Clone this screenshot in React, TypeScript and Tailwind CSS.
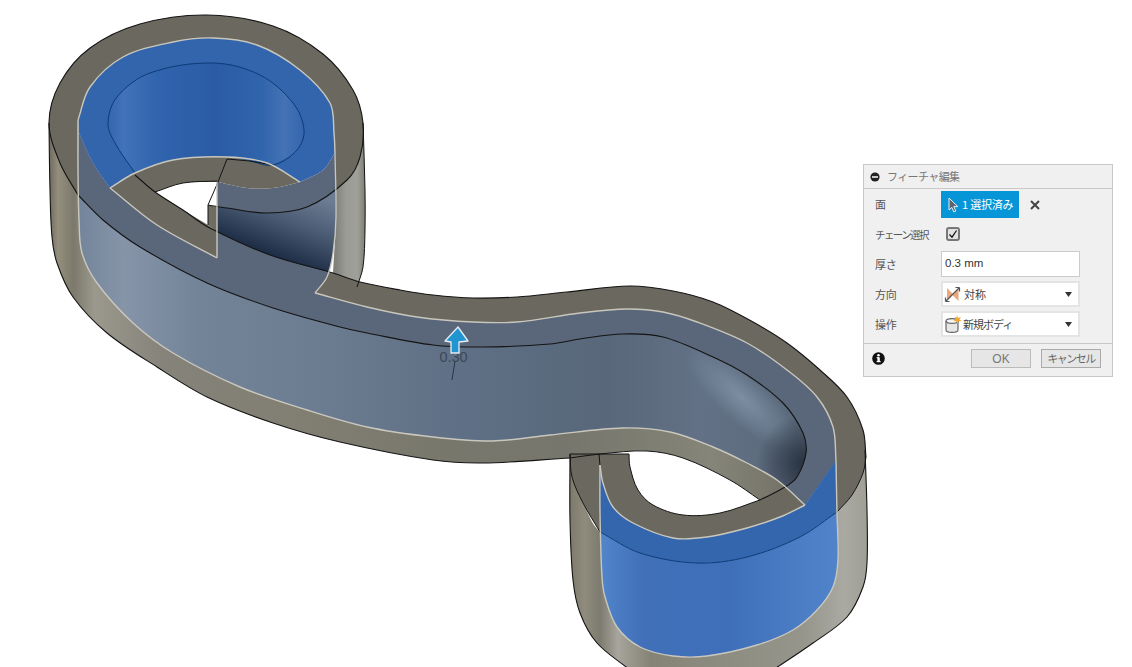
import React from "react";

type Pt = [number, number];

function seg(p: Pt[]): string {
  let d = "";
  const tan = (a: Pt, c: Pt): Pt => {
    const dx = c[0] - a[0];
    const dy = c[1] - a[1];
    const l = Math.hypot(dx, dy) || 1;
    return [dx / l, dy / l];
  };
  for (let i = 0; i < p.length - 1; i++) {
    const a = p[Math.max(0, i - 1)];
    const b = p[i];
    const c = p[i + 1];
    const e = p[Math.min(p.length - 1, i + 2)];
    const len = Math.hypot(c[0] - b[0], c[1] - b[1]) / 3;
    const t1 = tan(a, c);
    const t2 = tan(b, e);
    d += ` C${(b[0] + t1[0] * len).toFixed(1)} ${(b[1] + t1[1] * len).toFixed(1)} ${(c[0] - t2[0] * len).toFixed(1)} ${(c[1] - t2[1] * len).toFixed(1)} ${c[0]} ${c[1]}`;
  }
  return d;
}
function open(...parts: Pt[][]): string {
  let d = `M${parts[0][0][0]} ${parts[0][0][1]}`;
  parts.forEach((p, i) => {
    if (i > 0) d += ` L${p[0][0]} ${p[0][1]}`;
    d += seg(p);
  });
  return d;
}
const closed = (...parts: Pt[][]) => open(...parts) + " Z";
const rev = (p: Pt[]) => [...p].reverse();

const L1: Pt[] = [[78,120],[78,170],[79,220],[82,253],[97,283],[133,323],[173,353],[240,387],[307,410],[367,427],[433,437],[492,441],[550,435],[623,428],[670,432],[713,447],[747,463],[777,480],[805,505]];
const LT: Pt[] = [[315,293],[367,307],[417,317],[473,322],[517,322],[580,313],[627,309],[663,312],[697,322],[747,343],[787,370],[817,397],[833,427],[836,460]];
const LL: Pt[] = [[79,133],[93,163],[110,188]];
const LL2: Pt[] = [[110,188],[157,225],[217,258]];
const B1: Pt[] = [[78,195],[103,220],[140,247],[207,283],[273,308],[340,327],[367,333],[433,345],[483,347],[550,344],[580,339],[623,334],[663,337],[713,357],[747,375],[783,403],[803,433],[806,453],[797,477],[785,487],[760,500]];
const B2R: Pt[] = [[333,273],[360,282],[400,290],[433,295],[473,298],[517,297],[567,292],[630,286],[673,291],[713,302],[753,322],[787,343],[820,370],[847,397],[863,430],[866,457]];
const B2: Pt[] = [[135,175],[155,192],[183,210],[208,227],[270,255],...B2R];
const SB: Pt[] = [[49,123],[50,190],[52,237],[57,263],[73,297],[107,333],[157,367],[207,397],[273,423],[340,442],[433,460],[483,463],[570,458]];
const HU: Pt[] = [[570,458],[600,454],[647,451],[683,458],[730,480],[760,500]];
const OUTA: Pt[] = [[78,195],[60,163],[49,123],[60,83],[90,48],[140,24],[207,15],[273,26],[323,54],[353,90],[363,123],[360,157],[347,180],[335,190]];
const OUT: Pt[] = [...OUTA.slice(0, 13), [307,207],[267,213],[227,208],[208,205]];
const IN: Pt[] = [[78,120],[90,87],[123,57],[173,42],[213,38],[257,45],[300,70],[330,103],[334,133],[335,153]];
const ARC: Pt[] = [[110,188],[135,173],[173,160],[227,157],[267,163],[300,182]];
const ARC2: Pt[] = [[218,182],[247,188],[273,188],[300,182]];
const BR: Pt[] = [[300,182],[323,170],[335,153]];
const INNER: Pt[] = [[135,173],[115,143],[108,123],[117,97],[150,73],[213,63],[260,75],[293,103],[304,130],[297,150],[273,165],[250,161]];
const HL: Pt[] = [[629,454],[630,467],[638,490],[653,505],[683,515],[720,513],[760,500]];
const RI: Pt[] = [[600,465],[603,483],[613,507],[633,523],[673,538],[707,537],[747,528],[780,517],[805,505]];
const RO2: Pt[] = [[600,532],[640,553],[697,563],[747,557],[800,537],[837,512]];
const LB: Pt[] = [[600,465],[600,513],[602,577],[605,597],[617,627],[640,647],[673,656],[707,656],[757,645],[793,630],[817,610],[833,587],[838,560],[837,513],[836,460]];
const LBIN: Pt[] = [[602,532],[602,577],[605,597],[617,627],[640,647],[673,656],[707,656],[757,645],[793,630],[817,610],[833,587],[838,560],[837,512]];
const SL: Pt[] = [[570,454],[570,520],[573,580],[580,613],[597,643],[630,670]];
const SR: Pt[] = [[865,450],[867,510],[867,563],[863,587],[847,617],[813,643],[773,670]];
const RE: Pt[] = [[866,457],[863,473],[852,495],[837,512]];
const BANDFILL = "#5a6679";

function Model() {
  const k = "#141414";
  const lt = "#c9c7bd";
  return (
    <svg width="1132" height="667" viewBox="0 0 1132 667" className="block" fill="none">
      <defs>
        <linearGradient id="wa" gradientUnits="userSpaceOnUse" x1="49" y1="0" x2="810" y2="0">
          <stop offset="0" stopColor="#6d6a5e" />
          <stop offset="0.012" stopColor="#948e7d" />
          <stop offset="0.032" stopColor="#7c796c" />
          <stop offset="0.06" stopColor="#9b988d" />
          <stop offset="0.15" stopColor="#85837a" />
          <stop offset="0.33" stopColor="#817f72" />
          <stop offset="0.53" stopColor="#78776c" />
          <stop offset="0.68" stopColor="#77766c" />
          <stop offset="0.8" stopColor="#807f74" />
          <stop offset="0.87" stopColor="#86857a" />
          <stop offset="1" stopColor="#6f6d62" />
        </linearGradient>
        <linearGradient id="wb" gradientUnits="userSpaceOnUse" x1="570" y1="0" x2="868" y2="0">
          <stop offset="0" stopColor="#7d7a6c" />
          <stop offset="0.05" stopColor="#8f8c7d" />
          <stop offset="0.1" stopColor="#7d7b6f" />
          <stop offset="0.16" stopColor="#a7a59c" />
          <stop offset="0.27" stopColor="#858375" />
          <stop offset="0.45" stopColor="#8b8a7e" />
          <stop offset="0.78" stopColor="#96958b" />
          <stop offset="0.92" stopColor="#aaa9a2" />
          <stop offset="1" stopColor="#a09f95" />
        </linearGradient>
        <linearGradient id="wc" gradientUnits="userSpaceOnUse" x1="335" y1="0" x2="367" y2="0">
          <stop offset="0" stopColor="#80807a" />
          <stop offset="0.35" stopColor="#9c9c96" />
          <stop offset="0.7" stopColor="#a0a09a" />
          <stop offset="1" stopColor="#767669" />
        </linearGradient>
        <linearGradient id="sl" gradientUnits="userSpaceOnUse" x1="80" y1="0" x2="810" y2="0">
          <stop offset="0" stopColor="#74859b" />
          <stop offset="0.06" stopColor="#8694a8" />
          <stop offset="0.16" stopColor="#738499" />
          <stop offset="0.32" stopColor="#6c7d91" />
          <stop offset="0.52" stopColor="#5f7086" />
          <stop offset="0.72" stopColor="#586779" />
          <stop offset="0.85" stopColor="#627185" />
          <stop offset="1" stopColor="#5a687a" />
        </linearGradient>
        <radialGradient id="lg" gradientUnits="userSpaceOnUse" cx="0" cy="0" r="1" gradientTransform="translate(742 398) rotate(42) scale(72 24)">
          <stop offset="0" stopColor="#8496ac" stopOpacity="0.8" />
          <stop offset="1" stopColor="#8496ac" stopOpacity="0" />
        </radialGradient>
        <radialGradient id="dk" gradientUnits="userSpaceOnUse" cx="806" cy="464" r="50">
          <stop offset="0" stopColor="#232c39" stopOpacity="0.95" />
          <stop offset="1" stopColor="#232c39" stopOpacity="0" />
        </radialGradient>
        <linearGradient id="dg" gradientUnits="userSpaceOnUse" x1="305" y1="192" x2="275" y2="270">
          <stop offset="0" stopColor="#6c7c92" />
          <stop offset="0.4" stopColor="#4a5b74" />
          <stop offset="1" stopColor="#0f1d36" />
        </linearGradient>
        <linearGradient id="bi" gradientUnits="userSpaceOnUse" x1="108" y1="0" x2="304" y2="0">
          <stop offset="0" stopColor="#3567ae" />
          <stop offset="0.08" stopColor="#4272b9" />
          <stop offset="0.25" stopColor="#3064ad" />
          <stop offset="0.55" stopColor="#2b5ba5" />
          <stop offset="0.78" stopColor="#3064ab" />
          <stop offset="0.9" stopColor="#4472b5" />
          <stop offset="1" stopColor="#3565ad" />
        </linearGradient>
        <linearGradient id="bl" gradientUnits="userSpaceOnUse" x1="600" y1="0" x2="838" y2="0">
          <stop offset="0" stopColor="#5285cb" />
          <stop offset="0.18" stopColor="#4170b8" />
          <stop offset="0.55" stopColor="#3e6fb8" />
          <stop offset="0.85" stopColor="#4c7ec6" />
          <stop offset="1" stopColor="#5183cb" />
        </linearGradient>
      </defs>

      {/* side walls */}
      <path d={closed([[363,123],[365,190],[365,230],[363,267],[357,287]], [[333,273],[336,217],[335,190]], [[347,180],[360,157]])} fill="url(#wc)" />
      <path d={closed(SL, rev(SR), [[837,512],[800,537],[747,557],[697,563],[640,553],[600,532],[583,503],[572,477]])} fill="url(#wb)" />
      <path d={closed(SB, HU, [[760,500],[785,487]], [[785,487],[805,505]], rev(L1))} fill="url(#wa)" />

      {/* see-through slate surfaces */}
      <path d={closed(L1, rev(LT), rev(LL2), rev(LL))} fill="url(#sl)" />
      <path d={closed(L1, rev(LT), rev(LL2), rev(LL))} fill="url(#lg)" />
      <path d={closed(L1, rev(LT), rev(LL2), rev(LL))} fill="url(#dk)" />
      <path d={closed(LL, LL2, LT, [[836,460],[805,505]], [[805,505],[785,487]], rev(B1))} fill={BANDFILL} />
      <path d={closed(ARC2, BR, [[335,153],[336,217],[333,253],[327,277],[315,293]], [[315,293],[217,258]], [[217,258],[217,182]])} fill={BANDFILL} />
      <path d="M217 258 L315 293" stroke={BANDFILL} strokeWidth="3" />
      <path d={closed([[217,207],[227,208],[267,213],[307,207],[335,190]], [[335,190],[336,217],[333,253],[328,272]], [[328,272],[270,255],[217,232]])} fill="url(#dg)" />

      {/* flat top faces */}
      <path d={closed(OUTA, rev(IN), [[78,120],[78,195]])} fill="#6b695f" />
      <path d={closed([[315,293],[327,277],[328,271]], B2R, RE, [[837,512],[836,460]], rev(LT))} fill="#6b695f" />
      <path d={closed(ARC, rev(ARC2), [[218,182],[183,183],[155,192]], [[155,192],[183,210],[208,225],[217,232]], [[217,232],[217,258]], rev(LL2))} fill="#6b695f" />
      <path d={closed(HL, [[760,500],[785,487]], [[785,487],[805,505]], rev(RI), [[600,465],[600,454]])} fill="#6b695f" />
      <path d={closed([[570,454],[600,454]], [[600,454],[600,532]], [[600,532],[583,503],[572,477],[570,454]])} fill="#6b695f" />

      {/* small block in the slit */}
      <path d="M208 205 L217 207 L217 232 L208 225 Z" fill="#6f6d62" />

      {/* blue faces */}
      <path d={closed(IN, rev(BR), rev(ARC), rev(LL))} fill="#3365ad" />
      <path d={closed(INNER.slice(0, 11), [[273,165],[250,161],[227,157],[173,160],[135,173]])} fill="url(#bi)" />
      <path d={closed(RI, [[805,505],[836,460]], [[836,460],[837,512]], rev(RO2), [[600,532],[600,465]])} fill="#3366ad" />
      <path d={closed(LBIN, rev(RO2))} fill="url(#bl)" />

      {/* thin lines in blue */}
      <path d={open(INNER)} stroke="#0c3a78" strokeWidth="1" />
      <path d={open(RO2)} stroke="#0c3a78" strokeWidth="1" />

      {/* silhouette & black edges */}
      <path d={open(SB)} stroke={k} strokeWidth="1.1" />
      <path d={open(OUT)} stroke={k} strokeWidth="1.1" />
      <path d={open(B1)} stroke={k} strokeWidth="1.1" />
      <path d={open(B2)} stroke={k} strokeWidth="1.1" />
      <path d={open(RE)} stroke={k} strokeWidth="1" />
      <path d={open([[363,123],[365,190],[365,230],[363,267],[357,287]])} stroke={k} strokeWidth="1" />
      <path d={open(SL)} stroke={k} strokeWidth="1.1" />
      <path d={open(SR)} stroke={k} strokeWidth="1.1" />
      <path d={open(HL)} stroke={k} strokeWidth="1" />
      <path d={open([[570,454],[572,477],[583,503],[600,532]])} stroke={k} strokeWidth="1" />
      <path d="M570 454 L629 454 M599 454 L600 466" stroke={k} strokeWidth="1" />
      <path d="M227 159 L218 182 L208 205 L208 225 M227 159 L250 161 L273 165" stroke={k} strokeWidth="1" />
      <path d={open([[155,192],[183,183],[217,181]])} stroke={k} strokeWidth="1" />
      <path d={open(HU)} stroke={k} strokeWidth="1" />

      {/* light inset lines */}
      <path d={open(L1)} stroke={lt} strokeWidth="1.4" />
      <path d={open(LT)} stroke={lt} strokeWidth="1.4" />
      <path d={open(IN)} stroke={lt} strokeWidth="1.4" />
      <path d={open(LL2)} stroke={lt} strokeWidth="1.4" />
      <path d={open(ARC)} stroke={lt} strokeWidth="1.4" />
      <path d={open([[217,182],[217,258]])} stroke={lt} strokeWidth="1.4" />
      <path d={open([[335,153],[336,217],[333,253],[327,277],[315,293]])} stroke={lt} strokeWidth="1.3" />
      <path d={open(RI)} stroke={lt} strokeWidth="1.4" />
      <path d={open(LB)} stroke={lt} strokeWidth="1.4" />

      {/* manipulator */}
      <text x="453.5" y="362" textAnchor="middle" fontFamily="'Liberation Sans', sans-serif" fontSize="14.5" fill="#3d4757">0.30</text>
      <path d="M455 361 L452 380" stroke="#2c3440" strokeWidth="1" />
      <path d="M458 327 L468 341 L459 342 L459 353 L451 353 L451 342 L445 341 Z" fill="#2194d2" stroke="#e8edf2" strokeWidth="1.3" strokeLinejoin="round" />
    </svg>
  );
}

function Caret() {
  return (
    <svg width="7" height="5" viewBox="0 0 7 5" className="ml-auto mr-1.5">
      <path d="M0 0 H7 L3.5 5 Z" fill="#333" />
    </svg>
  );
}

function Label({ children }: { children: React.ReactNode }) {
  return <div className="w-[77px] pl-[11px] text-[11px] leading-none text-[#555] tracking-[-0.3px]">{children}</div>;
}

export default function App() {
  return (
    <div className="relative h-[667px] w-[1132px] overflow-hidden bg-white font-['Noto_Sans_CJK_JP','Liberation_Sans',sans-serif]">
      <Model />
      <div className="absolute left-[863px] top-[164px] flex h-[213px] w-[250px] flex-col border border-[#c8c8c8] bg-[#f0f0f0]">
        <div className="flex h-[24px] shrink-0 items-center border-b border-[#c8c8c8] pl-[6px]">
          <svg width="10" height="10" viewBox="0 0 10 10">
            <circle cx="5" cy="5" r="4.6" fill="#222" />
            <rect x="2" y="4.2" width="6" height="1.6" fill="#f0f0f0" />
          </svg>
          <span className="ml-[7px] text-[11px] leading-none text-[#777] tracking-[-0.6px]">フィーチャ編集</span>
        </div>

        <div className="flex flex-1 flex-col pt-[2px]">
          <div className="flex h-[27px] items-center">
            <Label>面</Label>
            <div className="flex h-[27px] w-[78px] items-center bg-[#0696d7] pl-[7px] text-[11px] text-white">
              <svg width="11" height="16" viewBox="0 0 11 16">
                <path d="M1 1 L1 13 L3.8 10.4 L5.8 15 L7.8 14 L5.8 9.6 L9.8 9.6 Z" fill="#5c6670" stroke="#e8eef2" strokeWidth="1" />
              </svg>
              <span className="ml-[3px] leading-none tracking-[-0.2px] whitespace-nowrap">1 選択済み</span>
            </div>
            <svg width="10" height="10" viewBox="0 0 10 10" className="ml-[11px]">
              <path d="M1 1 L9 9 M9 1 L1 9" stroke="#444" strokeWidth="2" />
            </svg>
          </div>

          <div className="mb-[2px] flex h-[31px] items-center">
            <div className="w-[77px] whitespace-nowrap pl-[11px] pt-[3px] text-[10.5px] leading-none tracking-[-1.6px] text-[#555]">チェーン選択</div>
            <div className="ml-[5px] flex h-[14px] w-[14px] items-center justify-center rounded-[3px] border-2 border-[#777] bg-[#e2e2e2]">
              <svg width="10" height="10" viewBox="0 0 10 10">
                <path d="M1.5 5.5 L4 8.2 L8.5 1.5" stroke="#111" strokeWidth="1.2" fill="none" />
              </svg>
            </div>
          </div>

          <div className="flex h-[26px] items-center">
            <Label>厚さ</Label>
            <div className="flex h-[26px] w-[139px] items-center border border-[#ccc] bg-white pl-[3px] font-['Liberation_Sans',sans-serif] text-[11.5px] text-[#333]">0.3 mm</div>
          </div>

          <div className="mt-[4px] flex h-[26px] items-center">
            <Label>方向</Label>
            <div className="flex h-[26px] w-[139px] items-center border-2 border-[#e4e4e4] bg-white pl-[1px] text-[11px] text-[#444]">
              <svg width="17" height="17" viewBox="0 0 17 17">
                <path d="M3 2 L9 8 L14.5 3 L14.5 15 L8.5 9 L3 15 Z" fill="#eda77a" />
                <path d="M1.5 15.5 L15.5 1.5 M15.5 1.5 H11.5 M15.5 1.5 V5.5 M1.5 15.5 H5.5 M1.5 15.5 V11.5" stroke="#555" strokeWidth="1.2" fill="none" />
              </svg>
              <span className="ml-[3px] leading-none">対称</span>
              <Caret />
            </div>
          </div>

          <div className="mt-[4px] flex h-[26px] items-center">
            <Label>操作</Label>
            <div className="flex h-[26px] w-[139px] items-center border-2 border-[#e4e4e4] bg-white pl-[2px] text-[11px] text-[#444]">
              <svg width="17" height="19" viewBox="0 0 17 19">
                <path d="M1 6 V15 C1 18.2 13 18.2 13 15 V6" fill="#e6e6e6" stroke="#666" strokeWidth="1.2" />
                <ellipse cx="7" cy="6" rx="6" ry="2.4" fill="#f4f4f4" stroke="#666" strokeWidth="1.2" />
                <path d="M12 0 L13 3 L16 2 L14.4 4.5 L16.8 6 L13.6 6 L12.5 9 L11.2 6 L8.5 6 L10.7 4.2 L9.5 1.8 L11.5 2.8 Z" fill="#f5a623" />
              </svg>
              <span className="ml-[1px] whitespace-nowrap leading-none tracking-[-1px]">新規ボディ</span>
              <Caret />
            </div>
          </div>
        </div>

        <div className="flex h-[33px] shrink-0 items-center border-t border-[#c8c8c8] pb-[3px] pl-[8px] pr-[11px]">
          <svg width="13" height="13" viewBox="0 0 13 13">
            <circle cx="6.5" cy="6.5" r="6.3" fill="#111" />
            <rect x="5.4" y="5.4" width="2.4" height="4.4" fill="#fff" />
            <rect x="4.6" y="9" width="4" height="1.2" fill="#fff" />
            <rect x="4.6" y="5.2" width="2.4" height="1.1" fill="#fff" />
            <circle cx="6.5" cy="3.3" r="1.3" fill="#fff" />
          </svg>
          <div className="ml-auto flex h-[19px] w-[60px] items-center justify-center border border-[#bbb] bg-[#e6e6e6] font-['Liberation_Sans',sans-serif] text-[12px] text-[#777]">OK</div>
          <div className="ml-[10px] flex h-[19px] w-[60px] items-center justify-center border border-[#aaa] bg-[#e6e6e6] text-[11px] leading-none tracking-[-1.5px] text-[#666]">キャンセル</div>
        </div>
      </div>
    </div>
  );
}
